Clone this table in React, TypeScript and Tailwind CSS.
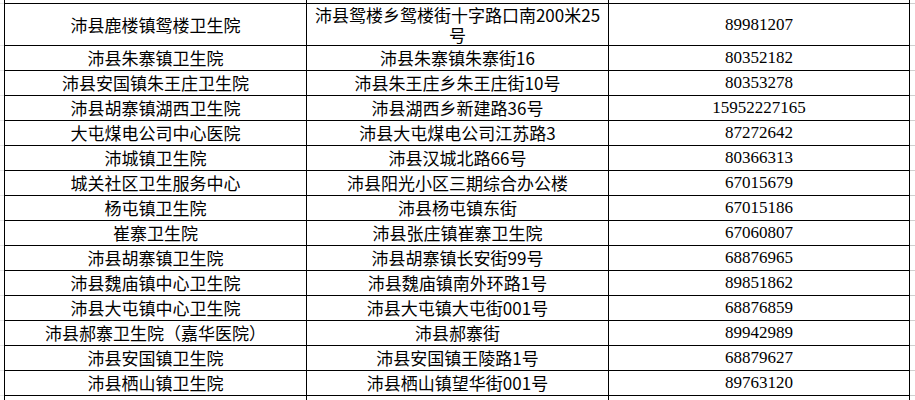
import React from 'react';

type Row = [React.ReactNode, React.ReactNode, string];

const rows: Row[] = [
    ['沛县鹿楼镇鸳楼卫生院', <>沛县鸳楼乡鸳楼街十字路口南200米25<br />号</>, '89981207'],
    ['沛县朱寨镇卫生院', '沛县朱寨镇朱寨街16', '80352182'],
    ['沛县安国镇朱王庄卫生院', '沛县朱王庄乡朱王庄街10号', '80353278'],
    ['沛县胡寨镇湖西卫生院', '沛县湖西乡新建路36号', '15952227165'],
    ['大屯煤电公司中心医院', '沛县大屯煤电公司江苏路3', '87272642'],
    ['沛城镇卫生院', '沛县汉城北路66号', '80366313'],
    ['城关社区卫生服务中心', '沛县阳光小区三期综合办公楼', '67015679'],
    ['杨屯镇卫生院', '沛县杨屯镇东街', '67015186'],
    ['崔寨卫生院', '沛县张庄镇崔寨卫生院', '67060807'],
    ['沛县胡寨镇卫生院', '沛县胡寨镇长安街99号', '68876965'],
    ['沛县魏庙镇中心卫生院', '沛县魏庙镇南外环路1号', '89851862'],
    ['沛县大屯镇中心卫生院', '沛县大屯镇大屯街001号', '68876859'],
    ['沛县郝寨卫生院（嘉华医院）', '沛县郝寨街', '89942989'],
    ['沛县安国镇卫生院', '沛县安国镇王陵路1号', '68879627'],
    ['沛县栖山镇卫生院', '沛县栖山镇望华街001号', '89763120'],
];

const cjk = "font-['Noto_Sans_CJK_SC','Noto_Sans',sans-serif]";
const serif = "font-['Liberation_Serif','Noto_Sans_CJK_SC',serif]";

const TableRow: React.FC<{ cells: Row; height: string; lead: string }> = ({ cells, height, lead }) => (
    <div className={`flex ${height}`}>
        <div className="w-[4px] shrink-0 border-b border-[#e6e6e6]" />
        <div className={`w-[303px] shrink-0 flex items-center justify-center text-center border-l border-r border-b border-black ${cjk} ${lead}`}>
            {cells[0]}
        </div>
        <div className={`w-[302px] shrink-0 flex items-center justify-center text-center border-r border-b border-black ${cjk} ${lead}`}>
            <span>{cells[1]}</span>
        </div>
        <div className={`w-[301px] shrink-0 flex items-center justify-center border-r border-b border-black ${serif} ${lead}`}>
            {cells[2]}
        </div>
        <div className="flex-1 border-b border-[#cfcfcf]" />
    </div>
);

export default function App() {
    return (
        <div className="w-[915px] h-[400px] overflow-hidden bg-white text-black text-[17px]">
            <TableRow cells={['', '', '']} height="h-[4px]" lead="leading-none" />
            {rows.map((r, i) => (
                <TableRow
                    key={i}
                    cells={r}
                    height={i === 0 ? 'h-[42px]' : 'h-[25px]'}
                    lead={i === 0 ? 'leading-[20px]' : 'leading-[24px]'}
                />
            ))}
            <TableRow cells={['', '', '']} height="h-[25px]" lead="leading-[24px]" />
        </div>
    );
}
